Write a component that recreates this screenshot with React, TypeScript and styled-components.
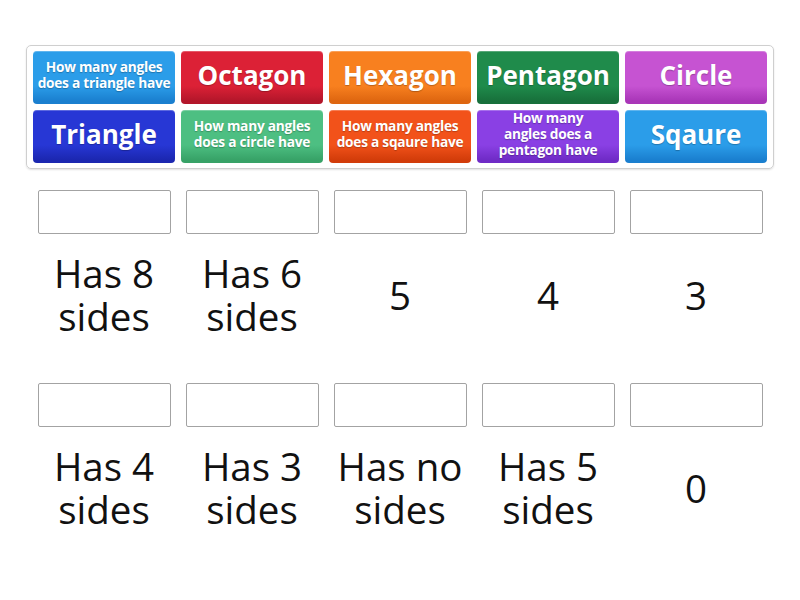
import styled, { createGlobalStyle } from "styled-components";

type Tile = { text: string; color: string; dark: string; small?: boolean };

const tiles: Tile[] = [
  { text: "How many angles\ndoes a triangle have", color: "#2b9de9", dark: "#1a7fcf", small: true },
  { text: "Octagon", color: "#dc2136", dark: "#b3162a" },
  { text: "Hexagon", color: "#f8801f", dark: "#de6610" },
  { text: "Pentagon", color: "#1f8b4b", dark: "#17703b" },
  { text: "Circle", color: "#c653d2", dark: "#a936b8" },
  { text: "Triangle", color: "#2737d5", dark: "#1b27b0" },
  { text: "How many angles\ndoes a circle have", color: "#4dbf82", dark: "#37a267", small: true },
  { text: "How many angles\ndoes a sqaure have", color: "#f2521a", dark: "#d23c0a", small: true },
  { text: "How many\nangles does a\npentagon have", color: "#8a40e4", dark: "#6f2bc6", small: true },
  { text: "Sqaure", color: "#2b9de9", dark: "#1a7fcf" },
];

const rows = [
  ["Has 8\nsides", "Has 6\nsides", "5", "4", "3"],
  ["Has 4\nsides", "Has 3\nsides", "Has no\nsides", "Has 5\nsides", "0"],
];

export default function App() {
  return (
    <>
      <GlobalStyle />
      <Page>
        <Tray>
          {tiles.map((t, i) => (
            <TileBox key={i} color={t.color} dark={t.dark}>
              <TileText small={t.small}>{t.text}</TileText>
            </TileBox>
          ))}
        </Tray>
        <Targets>
          {rows.flat().map((label, i) => (
            <Cell key={i}>
              <DropBox />
              <Label>{label}</Label>
            </Cell>
          ))}
        </Targets>
      </Page>
    </>
  );
}

const GlobalStyle = createGlobalStyle`
  html, body, #root {
    margin: 0;
    padding: 0;
    background: #fff;
  }
  body {
    font-family: 'Open Sans', 'Noto Sans', sans-serif;
  }
`;

const Page = styled.div`
  width: 800px;
  height: 600px;
  padding-top: 45px;
  box-sizing: border-box;
  display: flex;
  flex-direction: column;
  align-items: center;
`;

const Tray = styled.div`
  width: 748px;
  box-sizing: border-box;
  padding: 5px 6px 5px 6px;
  border: 1px solid #cfcfcf;
  border-radius: 5px;
  box-shadow: 0 1px 2px rgba(0, 0, 0, 0.12);
  display: grid;
  grid-template-columns: repeat(5, 142px);
  grid-auto-rows: 53px;
  gap: 6px;
`;

const TileBox = styled.div<{ color: string; dark: string }>`
  box-sizing: border-box;
  border-radius: 4px;
  background: linear-gradient(
    to bottom,
    ${({ color }) => color} 0%,
    ${({ color }) => color} 70%,
    ${({ dark }) => dark} 100%
  );
  border-bottom: 3px solid ${({ dark }) => dark};
  box-shadow: inset 0 1px 0 rgba(255, 255, 255, 0.25);
  display: flex;
  align-items: center;
  justify-content: center;
  padding: 0 2px 2px;
`;

const TileText = styled.div<{ small?: boolean }>`
  color: #fff;
  font-weight: 700;
  text-align: center;
  white-space: pre-line;
  font-size: ${({ small }) => (small ? "13.7px" : "26px")};
  line-height: ${({ small }) => (small ? "16px" : "30px")};
  text-shadow: 0 1px 1px rgba(0, 0, 0, 0.25);
  letter-spacing: ${({ small }) => (small ? "-0.25px" : "0")};
`;

const Targets = styled.div`
  margin-top: 21px;
  display: grid;
  grid-template-columns: repeat(5, 148px);
  row-gap: 45px;
`;

const Cell = styled.div`
  display: flex;
  flex-direction: column;
  align-items: center;
`;

const DropBox = styled.div`
  width: 133px;
  height: 44px;
  box-sizing: border-box;
  border: 1px solid #a3a3a3;
  border-radius: 2px;
  background: #fff;
`;

const Label = styled.div`
  margin-top: 18px;
  height: 86px;
  width: 148px;
  display: flex;
  align-items: center;
  justify-content: center;
  text-align: center;
  white-space: pre-line;
  font-size: 38.5px;
  line-height: 43px;
  color: #111;
`;
